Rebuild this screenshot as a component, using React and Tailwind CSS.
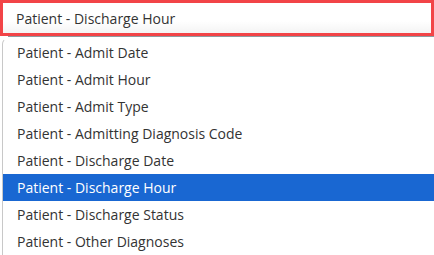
const options = [
  "Patient - Admit Date",
  "Patient - Admit Hour",
  "Patient - Admit Type",
  "Patient - Admitting Diagnosis Code",
  "Patient - Discharge Date",
  "Patient - Discharge Hour",
  "Patient - Discharge Status",
  "Patient - Other Diagnoses",
];

const selected = "Patient - Discharge Hour";

export default function App() {
  return (
    <div
      className="h-[255px] w-[434px] overflow-hidden bg-white text-[14px] text-[#333]"
      style={{ fontFamily: '"Open Sans", sans-serif' }}
    >
      <div className="flex h-[36px] items-center border-[3px] border-[#f24447] bg-gradient-to-b from-white from-60% to-[#f4f4f4] pl-[13px]">
        Patient - Discharge Hour
      </div>
      <div className="ml-[8px] h-px bg-[#8d9ba1]" />
      <div className="ml-[2px] mt-[1px] rounded-tl-[6px] border-l border-t border-[#c8c8c8] border-t-transparent">
        {options.map((o) => (
          <div
            key={o}
            className={`flex h-[27px] items-center pl-[14px] ${
              o === selected ? "bg-[#1967d2] text-white" : ""
            }`}
          >
            {o}
          </div>
        ))}
      </div>
    </div>
  );
}
